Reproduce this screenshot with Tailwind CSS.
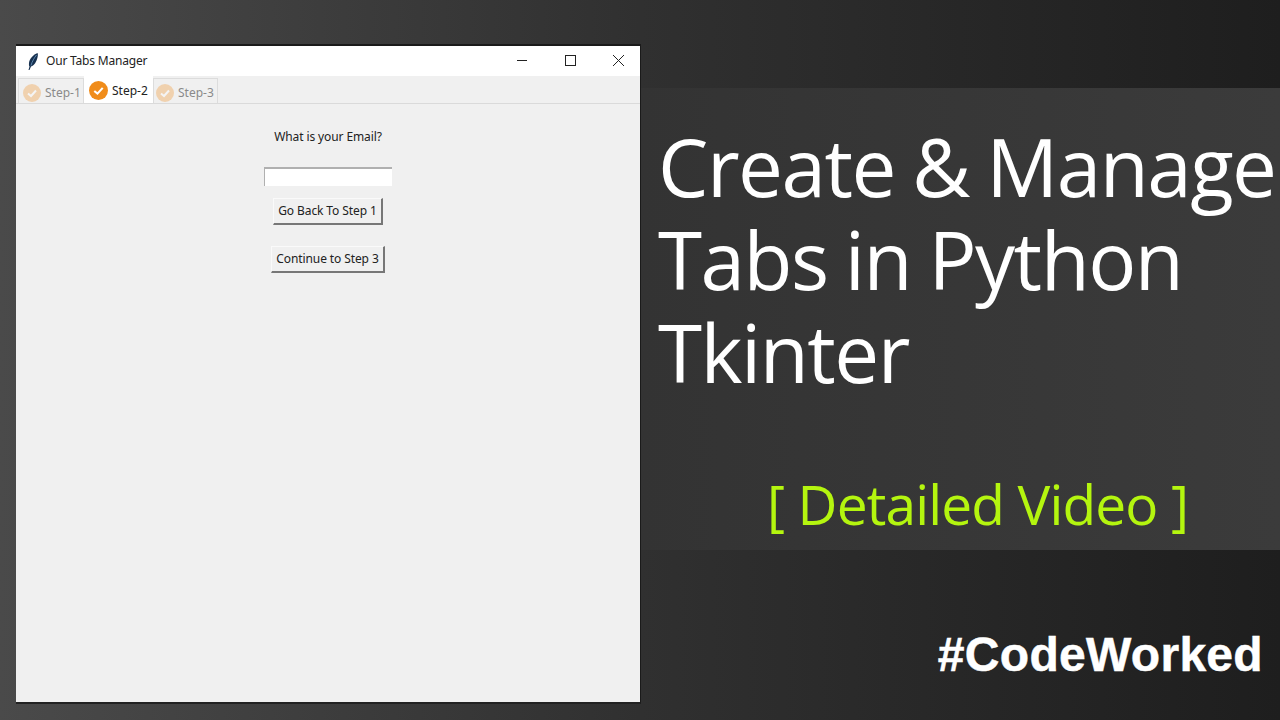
<!DOCTYPE html>
<html lang="en">
  <head>
    <meta charset="UTF-8" />
    <title>Create & Manage Tabs in Python Tkinter</title>
    <script src="https://cdn.jsdelivr.net/npm/@tailwindcss/browser@4"></script>
  </head>
  <body class="w-[1280px] h-[720px] overflow-hidden flex bg-[linear-gradient(90deg,#4a4a4a_0%,#303030_50%,#1e1e1e_100%)] font-['Open_Sans',sans-serif]">
    <!-- tkinter window -->
    <div class="w-[641px] shrink-0 pl-4 pt-[44px]">
      <div class="w-[625px] h-[660px] flex flex-col bg-[#f0f0f0] border-t-2 border-r border-b-2 border-t-[#1a1a1a] border-r-[#1a1a1a] border-b-[#222222]">
        <div class="h-[30px] shrink-0 flex items-center bg-white text-[12px] tracking-[-0.2px] text-[#222222] font-['Noto_Sans',sans-serif]">
          <svg class="ml-[10px] w-[14px] h-[19px]" viewBox="0 0 14 18">
            <path d="M11.500 0.500C7.500 2 3.500 6 3 10.500C2.800 12.500 3 13.500 3.500 14L2.500 17.500L3.500 17.500L5 14C8.500 13 10.500 9 11.500 5C12 3 12 1.500 11.500 0.500Z" fill="#16304f" />
            <path d="M10.500 2.500C8.500 5 6 9 5 13" stroke="#6f9cc7" stroke-width="0.800" fill="none" />
          </svg>
          <span class="ml-[6px]">Our Tabs Manager</span>
          <div class="ml-auto flex items-center">
            <svg class="w-[48px] h-[30px]" viewBox="0 0 48 30"><path d="M19 14.500H29" stroke="#222222" stroke-width="1" /></svg>
            <svg class="w-[48px] h-[30px]" viewBox="0 0 48 30"><rect x="19.500" y="9.500" width="10" height="10" fill="none" stroke="#222222" stroke-width="1" /></svg>
            <svg class="w-[46px] h-[30px]" viewBox="0 0 46 30"><path d="M19 9L30 20M30 9L19 20" stroke="#222222" stroke-width="1" /></svg>
          </div>
        </div>
        <div class="h-[28px] shrink-0 flex items-end pl-[2px] border-b border-[#dadada] text-[12px] font-['Noto_Sans',sans-serif]">
          <div class="h-[25px] w-[66px] flex items-center gap-[4px] pl-[4px] pt-[3px] bg-[#f0f0f0] border border-b-0 border-[#dcdcdc] text-[#8a8a8a]">
            <svg class="w-[18px] h-[18px] opacity-30" viewBox="0 0 18 18"><circle cx="9" cy="9" r="9" fill="#f08c1a" /><path d="M5 9.500L8 12L13 6.500" stroke="#ffffff" stroke-width="2" fill="none" /></svg>
            <span>Step-1</span>
          </div>
          <div class="h-[28px] w-[69px] flex items-center gap-[4px] pl-[5px] pt-[3px] bg-white text-[#222222]">
            <svg class="w-[19px] h-[19px]" viewBox="0 0 18 18"><circle cx="9" cy="9" r="9" fill="#f08c1a" /><path d="M5 9.500L8 12L13 6.500" stroke="#ffffff" stroke-width="2" fill="none" /></svg>
            <span>Step-2</span>
          </div>
          <div class="h-[25px] w-[65px] flex items-center gap-[4px] pl-[2px] pt-[3px] bg-[#f0f0f0] border border-b-0 border-[#dcdcdc] text-[#8a8a8a]">
            <svg class="w-[18px] h-[18px] opacity-30" viewBox="0 0 18 18"><circle cx="9" cy="9" r="9" fill="#f08c1a" /><path d="M5 9.500L8 12L13 6.500" stroke="#ffffff" stroke-width="2" fill="none" /></svg>
            <span>Step-3</span>
          </div>
        </div>
        <div class="flex-1 flex flex-col items-center text-[12px] tracking-[-0.1px] text-[#222222] font-['Noto_Sans',sans-serif]">
          <p class="mt-[24px] leading-[18px]">What is your Email?</p>
          <div class="mt-[21px] w-[128px] h-[19px] bg-white border-t-2 border-l border-[#b0b0b0]"></div>
          <button class="mt-[12px] w-[110px] h-[27px] bg-[#f0f0f0] border border-[#fafafa] border-r-2 border-b-2 border-r-[#777777] border-b-[#777777]">Go Back To Step 1</button>
          <button class="mt-[21px] w-[114px] h-[27px] bg-[#f0f0f0] border border-[#fafafa] border-r-2 border-b-2 border-r-[#777777] border-b-[#777777]">Continue to Step 3</button>
        </div>
      </div>
    </div>
    <!-- right side title -->
    <div class="w-[639px] shrink-0 flex flex-col">
      <div class="h-[88px] shrink-0"></div>
      <div class="h-[462px] shrink-0 bg-[linear-gradient(90deg,#333333,#3b3b3b)] pl-[17px] pt-[31px] text-white">
        <h1 class="text-[80px] leading-[93px] tracking-[-1.5px] [word-spacing:-2px] whitespace-nowrap">Create &amp; Manage<br />Tabs in Python<br />Tkinter</h1>
        <p class="mt-[71px] ml-[109px] text-[55px] leading-[70px] tracking-[-0.85px] text-[#b4f50f] whitespace-nowrap">[ Detailed Video ]</p>
      </div>
      <div class="flex-1 flex items-start justify-end pr-[17px] pt-[75px]">
        <p class="text-[48px] leading-[60px] font-bold tracking-[0.3px] text-white [-webkit-text-stroke:0.5px_white] font-['Liberation_Sans',sans-serif]">#CodeWorked</p>
      </div>
    </div>
  </body>
</html>
